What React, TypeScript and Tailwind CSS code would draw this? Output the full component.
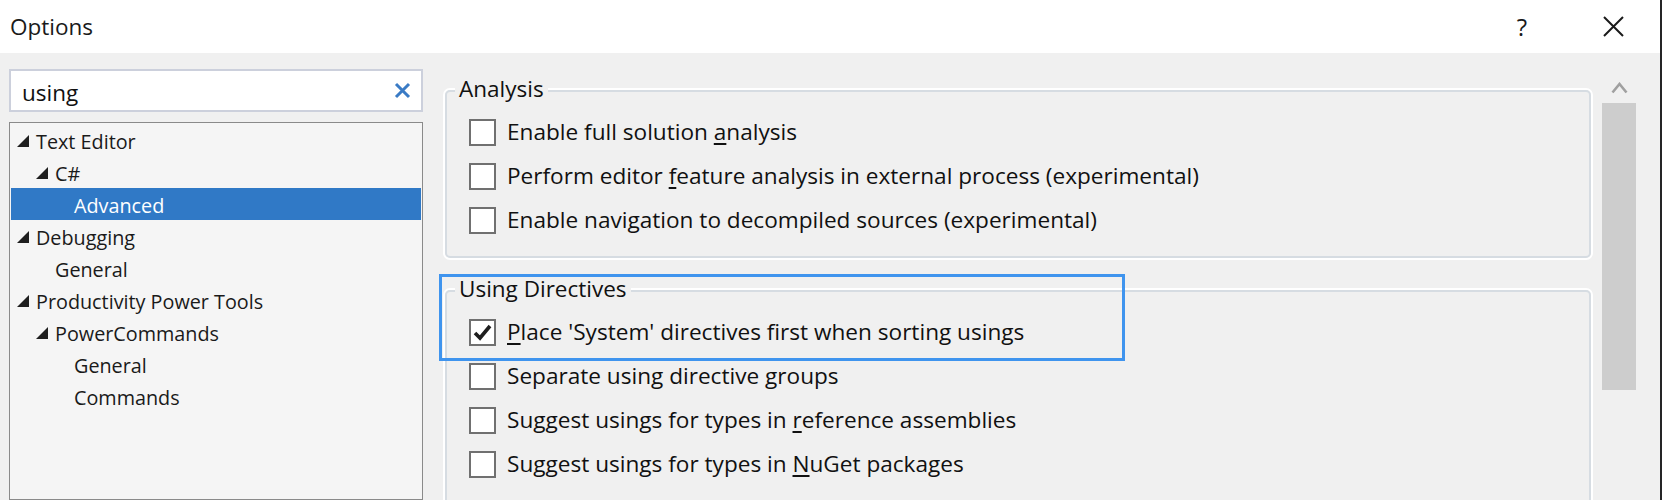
import React from "react";

type TreeItem = { label: string; level: 0 | 1 | 2; expandable: boolean; selected?: boolean };

const tree: TreeItem[] = [
  { label: "Text Editor", level: 0, expandable: true },
  { label: "C#", level: 1, expandable: true },
  { label: "Advanced", level: 2, expandable: false, selected: true },
  { label: "Debugging", level: 0, expandable: true },
  { label: "General", level: 1, expandable: false },
  { label: "Productivity Power Tools", level: 0, expandable: true },
  { label: "PowerCommands", level: 1, expandable: true },
  { label: "General", level: 2, expandable: false },
  { label: "Commands", level: 2, expandable: false },
];

const levelPad = ["pl-[6px]", "pl-[25px]", "pl-[44px]"];

function Triangle() {
  return (
    <svg width="12" height="12" viewBox="0 0 12 12" className="block">
      <path d="M12 0 L12 12 L0 12 Z" fill="#1e1e1e" />
    </svg>
  );
}

function Checkbox({ checked }: { checked?: boolean }) {
  return (
    <div className="w-[27px] h-[27px] shrink-0 border-2 border-[#707070] bg-white flex items-center justify-center">
      {checked && (
        <svg width="19" height="17" viewBox="0 0 19 17">
          <path d="M2 9 L7 14 L17 2" fill="none" stroke="#1e1e1e" strokeWidth="3.6" strokeLinecap="butt" strokeLinejoin="miter" />
        </svg>
      )}
    </div>
  );
}

function Row({ children, checked }: { children: React.ReactNode; checked?: boolean }) {
  return (
    <div className="h-[44px] flex items-center">
      <Checkbox checked={checked} />
      <span className="ml-[11px] text-[22.6px] leading-[30px] text-[#111] whitespace-nowrap">{children}</span>
    </div>
  );
}

function Group({ title, children }: { title: string; children: React.ReactNode }) {
  return (
    <div className="relative rounded-[7px] border-2 border-white">
      <div className="rounded-[5px] border-2 border-[#d6dce2] pt-[18px] pb-[14px] pl-[22px]">{children}</div>
      <div className="absolute left-[10px] top-[-15px] bg-[#f0f0f0] px-[4px] text-[22.5px] leading-[28px] text-[#111] whitespace-nowrap">
        {title}
      </div>
    </div>
  );
}

export default function App() {
  return (
    <div className="w-[1662px] h-[500px] overflow-hidden flex bg-[#f0f0f0] font-['Open_Sans',sans-serif]">
      <div className="w-[1660px] h-[500px] flex flex-col">
        {/* Title bar */}
        <div className="h-[53px] shrink-0 bg-white flex items-center">
          <span className="pl-[10px] text-[22.5px] leading-[30px] text-[#1a1a1a]">Options</span>
          <div className="ml-auto flex items-center pr-[27px]">
            <div className="w-[40px] h-[40px] flex items-center justify-center text-[24px] leading-[30px] text-[#1a1a1a]">?</div>
            <div className="w-[40px] h-[40px] ml-[51px] flex items-center justify-center">
              <svg width="21" height="21" viewBox="0 0 21 21">
                <path d="M1 1 L20 20 M20 1 L1 20" stroke="#1a1a1a" strokeWidth="2" fill="none" />
              </svg>
            </div>
          </div>
        </div>

        {/* Content */}
        <div className="flex-1 flex min-h-0">
          {/* Left column */}
          <div className="w-[414px] ml-[9px] shrink-0 flex flex-col">
            <div className="mt-[16px] h-[43px] shrink-0 border-2 border-[#ccd0dc] bg-white flex items-center pl-[11px] pr-[10px]">
              <span className="mt-[4px] text-[22.5px] leading-[30px] text-[#111]">using</span>
              <svg width="17" height="17" viewBox="0 0 17 17" className="ml-auto">
                <path d="M2 2 L15 15 M15 2 L2 15" stroke="#3a7bc5" strokeWidth="3" fill="none" />
              </svg>
            </div>
            <div className="mt-[10px] flex-1 border border-[#8a8a8a] bg-[#f5f5f5] p-[1px]">
              {tree.map((item, i) => (
                <div
                  key={i}
                  className={
                    "h-[32px] flex items-center " +
                    levelPad[item.level] +
                    (item.selected ? " bg-[#3079c6] text-white" : " text-[#1a1a1a]")
                  }
                >
                  <div className="mt-[4px] flex items-center">
                    <div className="w-[12px] mr-[7px] shrink-0 mb-[3px]">{item.expandable && <Triangle />}</div>
                    <span className="text-[19.8px] leading-[28px] whitespace-nowrap">{item.label}</span>
                  </div>
                </div>
              ))}
            </div>
          </div>

          {/* Right column */}
          <div className="ml-[20px] w-[1150px] shrink-0 flex flex-col">
            <div className="mt-[35px]">
              <Group title="Analysis">
                <Row>
                  Enable full solution <span className="underline underline-offset-[3px]">a</span>nalysis
                </Row>
                <Row>
                  Perform editor <span className="underline underline-offset-[3px]">f</span>eature analysis in external process (experimental)
                </Row>
                <Row>Enable navigation to decompiled sources (experimental)</Row>
              </Group>
            </div>
            <div className="mt-[28px] relative">
              <Group title="Using Directives">
                <Row checked>
                  <span className="underline underline-offset-[3px]">P</span>lace 'System' directives first when sorting usings
                </Row>
                <Row>Separate using directive groups</Row>
                <Row>
                  Suggest usings for types in <span className="underline underline-offset-[3px]">r</span>eference assemblies
                </Row>
                <Row>
                  Suggest usings for types in <span className="underline underline-offset-[3px]">N</span>uGet packages
                </Row>
                <div className="h-[40px]" />
              </Group>
              <div className="absolute left-[-4px] top-[-14px] w-[686px] h-[87px] border-[3px] border-[#3f94ee]" />
            </div>
          </div>

          {/* Scrollbar */}
          <div className="flex-1 flex flex-col items-start pl-[9px]">
            <div className="w-[34px] mt-[29px] h-[12px] flex justify-center">
              <svg width="17" height="12" viewBox="0 0 17 12">
                <path d="M1.5 10.5 L8.5 2 L15.5 10.5" stroke="#a0a0a0" strokeWidth="2.6" fill="none" />
              </svg>
            </div>
            <div className="w-[34px] mt-[9px] h-[287px] bg-[#cdcdcd]" />
          </div>
        </div>
      </div>
      <div className="w-[2px] h-[500px] bg-[#252526]" />
    </div>
  );
}
